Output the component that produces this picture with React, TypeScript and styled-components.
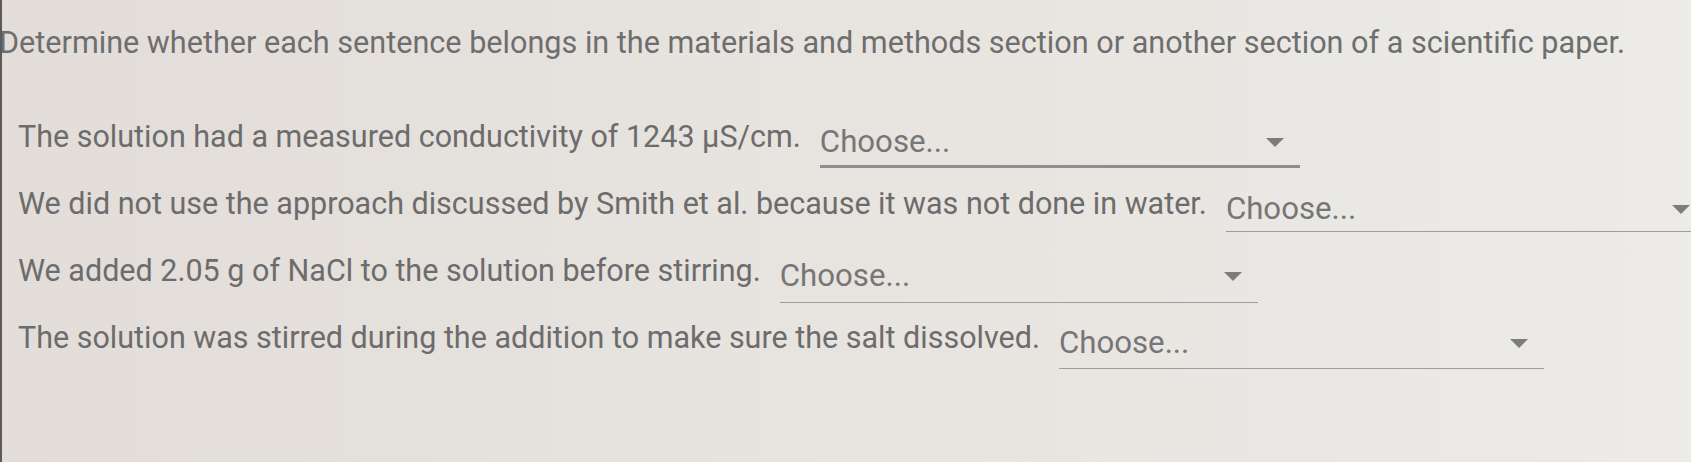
import styled, { createGlobalStyle } from "styled-components";

const GlobalStyle = createGlobalStyle`
  html, body {
    margin: 0;
    padding: 0;
    overflow: hidden;
  }
  body {
    font-family: Roboto, "Liberation Sans", sans-serif;
    background: #e6e2de;
  }
`;

const Page = styled.div`
  width: 1691px;
  height: 462px;
  box-sizing: border-box;
  overflow: hidden;
  background: linear-gradient(90deg, #e2ddd8 0%, #e7e3df 45%, #ecebe7 100%);
  border-left: 2px solid #5a5a5a;
  padding-top: 26px;
`;

const Title = styled.h1`
  margin: 0 0 60px -3px;
  font-size: 30.6px;
  line-height: 34px;
  font-weight: 400;
  color: #6e6e6e;
  white-space: nowrap;
`;

const List = styled.div`
  display: flex;
  flex-direction: column;
  padding-left: 16px;
`;

const Row = styled.div`
  display: flex;
  align-items: flex-start;
  height: 67px;
  white-space: nowrap;
`;

const Sentence = styled.span`
  font-size: 30.5px;
  line-height: 34px;
  color: #6c6c6c;
  margin-right: 19px;
`;

const Select = styled.div<{ $width: number; $drop: number; $focused?: boolean }>`
  flex: none;
  display: flex;
  justify-content: space-between;
  align-items: flex-start;
  width: ${({ $width }) => $width}px;
  height: ${({ $drop }) => $drop}px;
  box-sizing: border-box;
  padding: 5px 16px 0 0;
  border-bottom: ${({ $focused }) => ($focused ? "3px solid #8e8e8e" : "1.5px solid #9d9d9d")};
`;

const Placeholder = styled.span`
  font-size: 31.2px;
  line-height: 34px;
  color: #767676;
`;

const Caret = styled.span`
  margin-top: 13px;
  width: 0;
  height: 0;
  border-left: 9px solid transparent;
  border-right: 9px solid transparent;
  border-top: 9px solid #7c7c7c;
`;

const rows = [
  { text: "The solution had a measured conductivity of 1243 µS/cm.", width: 480, drop: 48, focused: true },
  { text: "We did not use the approach discussed by Smith et al. because it was not done in water.", width: 480, drop: 45 },
  { text: "We added 2.05 g of NaCl to the solution before stirring.", width: 478, drop: 49 },
  { text: "The solution was stirred during the addition to make sure the salt dissolved.", width: 485, drop: 48 },
];

export default function App() {
  return (
    <>
      <GlobalStyle />
      <Page>
        <Title>
          Determine whether each sentence belongs in the materials and methods section or another section of a
          scientific paper.
        </Title>
        <List>
          {rows.map((r) => (
            <Row key={r.text}>
              <Sentence>{r.text}</Sentence>
              <Select $width={r.width} $drop={r.drop} $focused={r.focused}>
                <Placeholder>Choose...</Placeholder>
                <Caret />
              </Select>
            </Row>
          ))}
        </List>
      </Page>
    </>
  );
}
